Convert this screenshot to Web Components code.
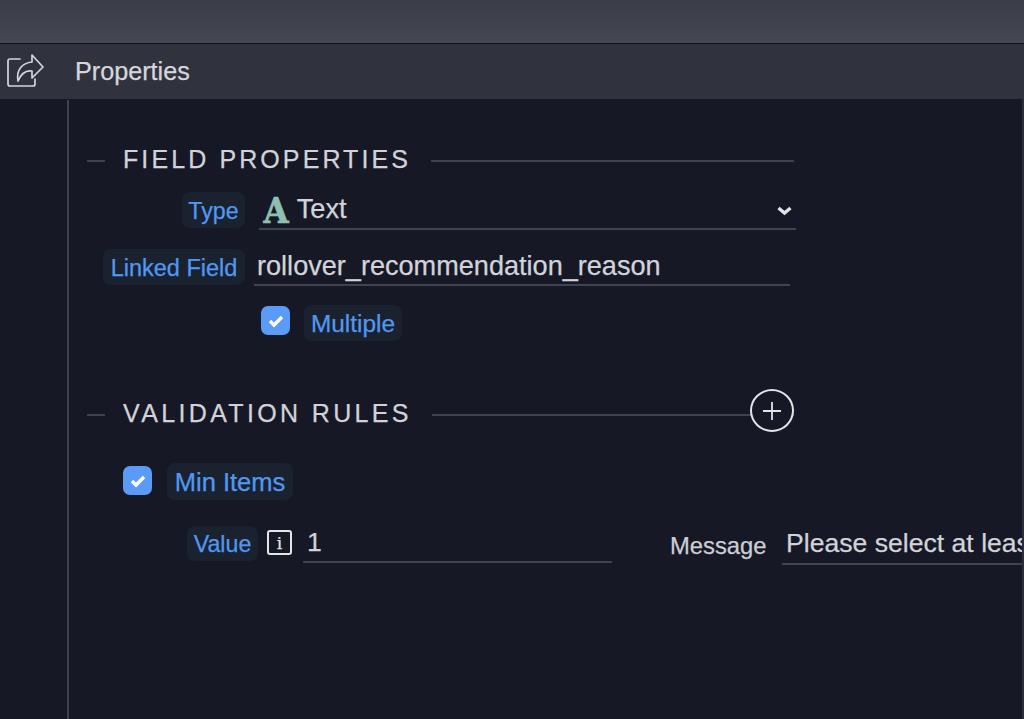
<!DOCTYPE html>
<html lang="en"><head><meta charset="utf-8"><title>Properties</title>
<style>
html,body{margin:0;height:100%;background:#161925;overflow:hidden}
body{font-family:"Liberation Sans",Arial,sans-serif;font-size:24.5px;color:#d2d3da;-webkit-text-stroke:.25px currentColor}
</style></head><body>
<app-shell>
  <top-bar></top-bar>
  <title-bar>Properties</title-bar>
  <main-panel>
    <section-head style="margin-top:45px">FIELD PROPERTIES</section-head>
    <form-row style="margin:17px 0 0 95px">
      <field-pill style="width:63px;font-size:23.2px">Type</field-pill>
      <line-field style="margin-left:14px;width:537px;height:38px;font-size:27.2px;--dy:-1px" chevron>
        <span slot="icon" class="a">A</span>Text
      </line-field>
    </form-row>
    <form-row style="margin:19px 0 0 16px">
      <field-pill style="width:142px;font-size:23.5px">Linked Field</field-pill>
      <line-field style="margin-left:9px;width:536px;height:37px;font-size:27.1px;--dy:-1px" inset="3">rollover_recommendation_reason</line-field>
    </form-row>
    <form-row style="margin:19px 0 0 174px">
      <check-box style="margin-top:1px"></check-box>
      <field-pill style="width:98px;margin-left:14px;font-size:24.4px">Multiple</field-pill>
    </form-row>
    <section-head style="margin-top:58px;letter-spacing:3.35px" add>VALIDATION RULES</section-head>
    <form-row style="margin:34px 0 0 36px">
      <check-box style="margin-top:3px"></check-box>
      <field-pill style="width:126px;height:37px;margin-left:15px;font-size:25.5px">Min Items</field-pill>
    </form-row>
    <form-row style="margin:26px 0 0 100px">
      <field-pill style="width:71px;height:35px;font-size:23.2px">Value</field-pill>
      <info-icon style="margin:4px 0 0 9px"></info-icon>
      <line-field style="margin-left:11px;width:309px;height:37px;--dy:-1px" inset="4">1</line-field>
      <plain-label style="margin:6px 0 0 58px;width:96px">Message</plain-label>
      <line-field style="margin-left:16px;width:240px;height:39px;--dy:-1px" inset="4">Please select at least one item</line-field>
    </form-row>
  </main-panel>
</app-shell>
<script>
function def(name, css, html){
  customElements.define(name, class extends HTMLElement{
    constructor(){super();const r=this.attachShadow({mode:'open'});
      r.innerHTML='<style>'+css+'</style>'+(typeof html==='function'?html(this):html);}
  });
}
def('app-shell',`:host{display:flex;flex-direction:column;width:1024px;height:719px;overflow:hidden;position:relative}
.edge{position:absolute;right:0;top:99px;bottom:0;width:2px;background:#2b2e39}`,`<slot></slot><div class="edge"></div>`);
def('top-bar',`:host{display:block;height:43px;flex:none;background:linear-gradient(#3a3d48,#454853);border-bottom:1px solid #0e1017}`,``);
def('title-bar',`:host{display:flex;align-items:center;height:55px;flex:none;background:#30333e;color:#d6d7dd;font-size:25.2px;box-sizing:border-box}
svg{width:46px;height:46px;margin-left:2px;flex:none}
span{margin-left:27px}`,
`<svg viewBox="2 49 46 46" fill="none" stroke="#d5d6dc" stroke-width="1.7" stroke-linejoin="round" stroke-linecap="round"><path d="M20 59H10Q8 59 8 61V84Q8 86 10 86H33Q35 86 35 84V79"/><path d="M18 81C16 70 22 63 32 62V55L43 67L32 78V71C26 70 21 74 18 81Z"/></svg><span><slot></slot></span>`);
def('main-panel',`:host{display:block;flex:1;margin-left:67px;border-left:2px solid #3f424d;margin-top:1px;padding-left:18px;box-sizing:border-box}`,`<slot></slot>`);
def('section-head',`:host{display:flex;align-items:center;width:707px;height:30px;position:relative;color:#d2d3da;font-size:25px;letter-spacing:3.1px}
i{display:block;height:2px;background:#3f424d;position:relative;top:1px}
i.d{width:18px;flex:none}
i.l{flex:1;margin-left:20px}
span{margin-left:18px;white-space:nowrap;position:relative;top:-1px}
button{position:absolute;right:0;top:-10px;width:44px;height:43px;border-radius:50%;border:2px solid #e3e4e8;background:#161925;padding:0;box-sizing:border-box;display:flex;align-items:center;justify-content:center}
svg{width:20px;height:20px}`,
h=>`<i class="d"></i><span><slot></slot></span><i class="l"></i>`+(h.hasAttribute('add')?`<button aria-label="Add"><svg viewBox="0 0 20 20" stroke="#e3e4e8" stroke-width="1.8"><path d="M10 1V19M1 10H19"/></svg></button>`:''));
def('form-row',`:host{display:flex;align-items:flex-start}`,`<slot></slot>`);
def('field-pill',`:host{display:flex;align-items:center;justify-content:center;flex:none;height:36px;box-sizing:border-box;padding-top:2px;border-radius:8px;background:#1a2230;color:#5298f0;white-space:nowrap}`,`<slot></slot>`);
def('plain-label',`:host{display:block;flex:none;color:#ccced4;font-size:23.8px;line-height:28px;white-space:nowrap}`,`<slot></slot>`);
def('check-box',`:host{display:flex;align-items:center;justify-content:center;width:29px;height:29px;flex:none;border-radius:7px;background:#5a9bf8}
svg{width:16px;height:14px}`,`<svg viewBox="0 0 16 14" fill="none" stroke="#fff" stroke-width="3.4"><path d="M2 7L6 11L14 3"/></svg>`);
def('info-icon',`:host{display:flex;align-items:center;justify-content:center;width:25px;height:25px;flex:none;border:2px solid #e3e4e8;border-radius:3px;box-sizing:border-box;font:400 17px "DejaVu Serif",serif;color:#e3e4e8}`,`i<slot></slot>`);
def('line-field',`:host{display:flex;align-items:center;flex:none;box-sizing:border-box;border-bottom:2px solid #41444f;font-size:26.6px;color:#d2d3da;white-space:nowrap;position:relative}
.c{position:absolute;right:4px;top:13px;width:15px;height:12px}
.t{display:flex;align-items:center;position:relative;top:var(--dy,-2px)}
::slotted(.a){font:700 36px/1 "DejaVu Serif",serif;color:#8fbfb0;margin:0 7.3px 0 2.5px;-webkit-text-stroke:.7px #8fbfb0;transform:translateY(1px) scaleX(.9)}`,
h=>{const inset=h.getAttribute('inset')||0;return `<span class="t" style="padding-left:${inset}px"><slot name="icon"></slot><slot></slot></span>`+(h.hasAttribute('chevron')?`<svg class="c" viewBox="0 0 15 12" fill="none" stroke="#e3e4e8" stroke-width="3.4"><path d="M1.5 3L7.5 8L13.5 3"/></svg>`:'')});
</script>
</body></html>
